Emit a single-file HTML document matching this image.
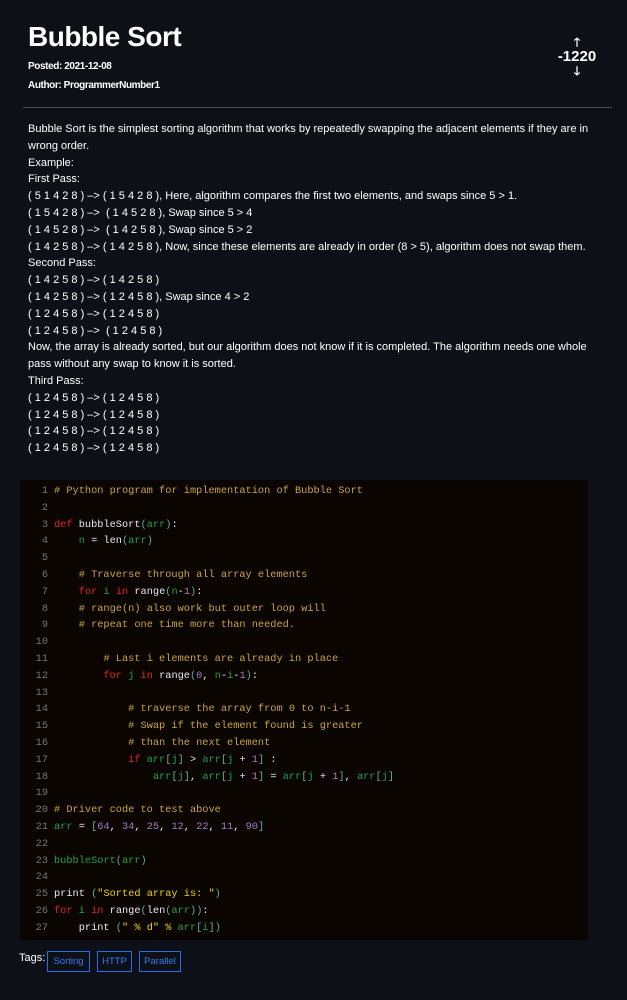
<!DOCTYPE html>
<html><head><meta charset="utf-8"><style>
body{margin:0;background:#0d1117;color:#fff;font-family:"Liberation Sans",sans-serif;width:627px;height:1000px;overflow:hidden;position:relative}
h1{position:absolute;left:28px;top:21px;margin:0;font-size:28px;font-weight:bold;letter-spacing:-0.5px}
.meta{position:absolute;left:28px;font-size:10px;font-weight:bold;letter-spacing:-0.4px}
.vote{position:absolute;left:549px;top:36px;width:56px;text-align:center;font-weight:bold;font-size:15px;line-height:17px}
.vote .a{font-size:12px;line-height:12px}
hr{position:absolute;left:23px;top:107px;width:589px;margin:0;border:0;border-top:1px solid #4a4d52}
.txt{position:absolute;left:28px;top:121px;width:580px;font-size:11px;line-height:16.8px}
.code{position:absolute;left:20px;top:480px;width:568px;height:460px;background:#0a0500;font-family:"Liberation Mono",monospace;font-size:10.3px;line-height:16.8px;color:#e8e8f8}
.code pre.src{margin:0;position:absolute;top:3px;left:34px;font:inherit;white-space:pre}
.code pre.ln{position:absolute;top:3px;left:0;width:28px;text-align:right;color:#777;white-space:pre;margin:0;font:inherit}
.c{color:#c9a544}.k{color:#e0261c}.g{color:#24a047}.n{color:#a07cc8}.s{color:#e8d400}.b{color:#6aa8a8}
.tags{position:absolute;left:19px;top:952px;font-size:11px}
.tag{position:absolute;top:951px;height:19px;border:1px solid #1f6feb;color:#2f7cf6;font-size:9.5px;line-height:19px;text-align:center}
</style></head><body>
<h1>Bubble Sort</h1>
<div class="meta" style="top:61px">Posted: 2021-12-08</div>
<div class="meta" style="top:80px">Author: ProgrammerNumber1</div>
<div class="vote"><div class="a">🡑</div>-1220<div class="a">🡓</div></div>
<hr>
<div class="txt">Bubble Sort is the simplest sorting algorithm that works by repeatedly swapping the adjacent elements if they are in wrong order.<br>Example:<br>First Pass:<br>( 5 1 4 2 8 ) –&gt; ( 1 5 4 2 8 ), Here, algorithm compares the first two elements, and swaps since 5 &gt; 1.<br>( 1 5 4 2 8 ) –&gt; &nbsp;( 1 4 5 2 8 ), Swap since 5 &gt; 4<br>( 1 4 5 2 8 ) –&gt; &nbsp;( 1 4 2 5 8 ), Swap since 5 &gt; 2<br>( 1 4 2 5 8 ) –&gt; ( 1 4 2 5 8 ), Now, since these elements are already in order (8 &gt; 5), algorithm does not swap them.<br>Second Pass:<br>( 1 4 2 5 8 ) –&gt; ( 1 4 2 5 8 )<br>( 1 4 2 5 8 ) –&gt; ( 1 2 4 5 8 ), Swap since 4 &gt; 2<br>( 1 2 4 5 8 ) –&gt; ( 1 2 4 5 8 )<br>( 1 2 4 5 8 ) –&gt; &nbsp;( 1 2 4 5 8 )<br>Now, the array is already sorted, but our algorithm does not know if it is completed. The algorithm needs one whole pass without any swap to know it is sorted.<br>Third Pass:<br>( 1 2 4 5 8 ) –&gt; ( 1 2 4 5 8 )<br>( 1 2 4 5 8 ) –&gt; ( 1 2 4 5 8 )<br>( 1 2 4 5 8 ) –&gt; ( 1 2 4 5 8 )<br>( 1 2 4 5 8 ) –&gt; ( 1 2 4 5 8 )</div>
<div class="code">
<pre class="ln">1
2
3
4
5
6
7
8
9
10
11
12
13
14
15
16
17
18
19
20
21
22
23
24
25
26
27</pre>
<pre class="src"><span class="c"># Python program for implementation of Bubble Sort</span>

<span class="k">def</span> bubbleSort<span class="b">(</span><span class="g">arr</span><span class="b">)</span>:
    <span class="g">n</span> = len<span class="b">(</span><span class="g">arr</span><span class="b">)</span>

    <span class="c"># Traverse through all array elements</span>
    <span class="k">for</span> <span class="g">i</span> <span class="k">in</span> range<span class="b">(</span><span class="g">n</span>-<span class="n">1</span><span class="b">)</span>:
    <span class="c"># range(n) also work but outer loop will</span>
    <span class="c"># repeat one time more than needed.</span>

        <span class="c"># Last i elements are already in place</span>
        <span class="k">for</span> <span class="g">j</span> <span class="k">in</span> range<span class="b">(</span><span class="n">0</span>, <span class="g">n</span>-<span class="g">i</span>-<span class="n">1</span><span class="b">)</span>:

            <span class="c"># traverse the array from 0 to n-i-1</span>
            <span class="c"># Swap if the element found is greater</span>
            <span class="c"># than the next element</span>
            <span class="k">if</span> <span class="g">arr</span><span class="b">[</span><span class="g">j</span><span class="b">]</span> &gt; <span class="g">arr</span><span class="b">[</span><span class="g">j</span> + <span class="n">1</span><span class="b">]</span> :
                <span class="g">arr</span><span class="b">[</span><span class="g">j</span><span class="b">]</span>, <span class="g">arr</span><span class="b">[</span><span class="g">j</span> + <span class="n">1</span><span class="b">]</span> = <span class="g">arr</span><span class="b">[</span><span class="g">j</span> + <span class="n">1</span><span class="b">]</span>, <span class="g">arr</span><span class="b">[</span><span class="g">j</span><span class="b">]</span>

<span class="c"># Driver code to test above</span>
<span class="g">arr</span> = <span class="b">[</span><span class="n">64</span>, <span class="n">34</span>, <span class="n">25</span>, <span class="n">12</span>, <span class="n">22</span>, <span class="n">11</span>, <span class="n">90</span><span class="b">]</span>

<span class="g">bubbleSort</span><span class="b">(</span><span class="g">arr</span><span class="b">)</span>

print <span class="b">(</span><span class="s">"Sorted array is: "</span><span class="b">)</span>
<span class="k">for</span> <span class="g">i</span> <span class="k">in</span> range<span class="b">(</span>len<span class="b">(</span><span class="g">arr</span><span class="b">))</span>:
    print <span class="b">(</span><span class="s">" % d"</span> <span class="s">%</span> <span class="g">arr</span><span class="b">[</span><span class="g">i</span><span class="b">])</span></pre>
</div>
<div class="tags">Tags:</div>
<div class="tag" style="left:47px;width:41px">Sorting</div>
<div class="tag" style="left:97px;width:33px">HTTP</div>
<div class="tag" style="left:139px;width:40px">Parallel</div>
</body></html>
